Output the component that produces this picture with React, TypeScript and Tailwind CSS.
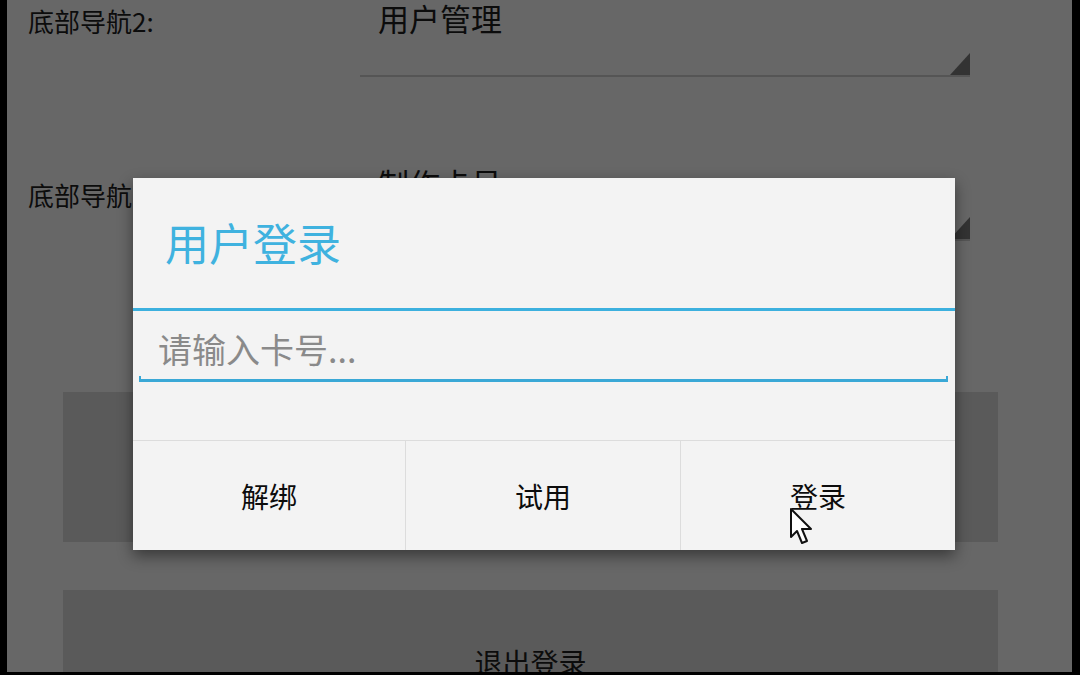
import React from 'react'

const font = { fontFamily: '"Noto Sans CJK SC", "Noto Sans", sans-serif' }

function Spinner({ value, className = '' }: { value: string; className?: string }) {
  return (
    <div className={`relative w-[610px] border-b-2 border-[#555] ${className}`}>
      <div className="pl-[18px] text-[31px] leading-[36px] text-[#0c0c0c]">{value}</div>
      <div className="absolute right-0 bottom-0 w-0 h-0 border-l-[20px] border-l-transparent border-b-[22px] border-b-[#333]" />
    </div>
  )
}

function Cursor() {
  return (
    <svg className="absolute left-[782px] top-[507px]" width="26" height="40" viewBox="0 0 26 40">
      <path d="M2 2 L2 30 L8 24 L13 36 L18 34 L13 22 L22 22 Z" fill="#fff" stroke="#111" strokeWidth="2" strokeLinejoin="round" />
    </svg>
  )
}

export default function App() {
  return (
    <div className="w-[1080px] h-[675px] bg-black overflow-hidden" style={font}>
      <div className="relative ml-[7px] w-[1065px] h-[672px] bg-[#676767] overflow-hidden">
        {/* Row 1 */}
        <div className="flex h-[165px]">
          <div className="w-[353px] pl-[21px] pt-[1px] text-[26px] leading-[40px] text-[#0c0c0c]">底部导航2:</div>
          <Spinner value="用户管理" className="h-[77px]" />
        </div>
        {/* Row 2 */}
        <div className="flex h-[227px]">
          <div className="w-[353px] pl-[21px] pt-[10px] text-[26px] leading-[40px] text-[#0c0c0c]">底部导航</div>
          <Spinner value="制作卡号" className="h-[76px]" />
        </div>
        {/* Buttons */}
        <div className="ml-[56px] w-[935px] h-[150px] bg-[#5a5a5a]" />
        <div className="ml-[56px] mt-[48px] w-[935px] h-[150px] bg-[#5a5a5a] flex justify-center pt-[52px] text-[28px] leading-[40px] text-[#0c0c0c]">
          退出登录
        </div>

        {/* Dialog */}
        <div className="absolute left-[126px] top-[178px] w-[822px] h-[372px] bg-[#f3f3f3] shadow-[0_6px_14px_rgba(0,0,0,0.45)] flex flex-col">
          <div className="h-[130px] flex items-center pl-[32px] pb-[2px] text-[44px] text-[#3fb2df]">用户登录</div>
          <div className="h-[3px] bg-[#3cb0de]" />
          <div className="relative h-[129px]">
            <div className="pl-[25px] pt-[16px] text-[34px] leading-[44px] text-[#8a8a8a]">请输入卡号...</div>
            <div className="absolute left-[6px] top-[65px] w-[809px] h-[6px] border-x-2 border-b-[3px] border-[#3aa8d6]" />
          </div>
          <div className="flex-1 flex border-t border-[#dcdcdc]">
            <div className="w-[272px] flex items-center justify-center text-[28px] text-[#0c0c0c]">解绑</div>
            <div className="w-[275px] border-l border-[#dcdcdc] flex items-center justify-center text-[28px] text-[#0c0c0c]">试用</div>
            <div className="flex-1 border-l border-[#dcdcdc] flex items-center justify-center text-[28px] text-[#0c0c0c]">登录</div>
          </div>
        </div>
        <Cursor />
      </div>
    </div>
  )
}
